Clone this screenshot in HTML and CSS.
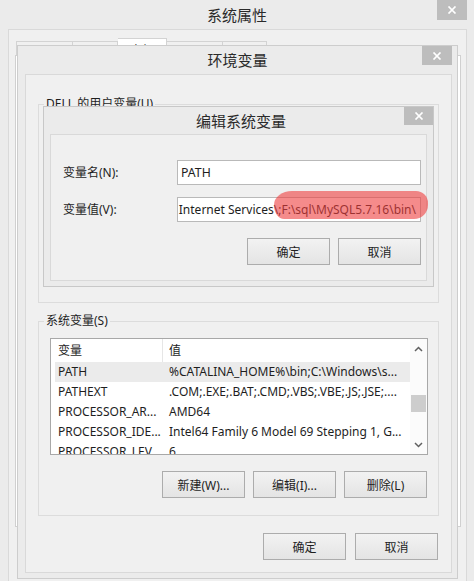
FILE: index.html
```html
<!DOCTYPE html>
<html lang="zh-CN">
<head>
<meta charset="utf-8">
<title>系统属性</title>
<link rel="stylesheet" href="styles.css">
</head>
<body>
<div class="desktop">

  <section class="win win-outer">
    <header class="titlebar tb-outer">
      <h1 class="title">系统属性</h1>
      <button class="close close-outer" aria-label="关闭"><svg width="10" height="8" viewBox="0 0 10 8"><path d="M1.5 0.5 L8.5 7.5 M8.5 0.5 L1.5 7.5" stroke="#fff" stroke-width="1.7" fill="none"/></svg></button>
    </header>
    <div class="client outer-client">
      <div class="tabs">
        <span class="tab tab-a"></span>
        <span class="tab tab-b"></span>
        <span class="tab tab-c selected">高级</span>
        <span class="tab tab-d"></span>
        <span class="tab tab-e"></span>
      </div>
      <div class="tabpanel"></div>
    </div>
  </section>

  <section class="win win-env">
    <header class="titlebar tb-env">
      <h1 class="title">环境变量</h1>
      <button class="close close-env" aria-label="关闭"><svg width="10" height="8" viewBox="0 0 10 8"><path d="M1.5 0.5 L8.5 7.5 M8.5 0.5 L1.5 7.5" stroke="#fff" stroke-width="1.7" fill="none"/></svg></button>
    </header>
    <div class="client env-client">
      <fieldset class="group group-user">
        <legend>DELL 的用户变量(U)</legend>
      </fieldset>
      <fieldset class="group group-sys">
        <legend>系统变量(S)</legend>
        <div class="listbox">
          <div class="list-main">
            <div class="lrow lhead"><span class="cname">变量</span><span class="cval">值</span></div>
            <div class="lrow sel"><span class="cname">PATH</span><span class="cval">%CATALINA_HOME%\bin;C:\Windows\s...</span></div>
            <div class="lrow"><span class="cname">PATHEXT</span><span class="cval">.COM;.EXE;.BAT;.CMD;.VBS;.VBE;.JS;.JSE;....</span></div>
            <div class="lrow"><span class="cname">PROCESSOR_AR...</span><span class="cval">AMD64</span></div>
            <div class="lrow"><span class="cname">PROCESSOR_IDE...</span><span class="cval">Intel64 Family 6 Model 69 Stepping 1, G...</span></div>
            <div class="lrow"><span class="cname">PROCESSOR_LEV...</span><span class="cval">6</span></div>
          </div>
          <div class="vscroll">
            <span class="sb-btn sb-up"><svg width="9" height="6" viewBox="0 0 9 6"><path d="M1 5 L4.5 1.5 L8 5" stroke="#606060" stroke-width="1.5" fill="none"/></svg></span>
            <span class="sb-track"><span class="sb-thumb"></span></span>
            <span class="sb-btn sb-down"><svg width="9" height="6" viewBox="0 0 9 6"><path d="M1 1 L4.5 4.5 L8 1" stroke="#606060" stroke-width="1.5" fill="none"/></svg></span>
          </div>
        </div>
        <div class="btnrow list-btns">
          <button class="btn">新建(W)...</button>
          <button class="btn">编辑(I)...</button>
          <button class="btn">删除(L)</button>
        </div>
      </fieldset>
      <div class="btnrow env-btns">
        <button class="btn">确定</button>
        <button class="btn">取消</button>
      </div>
    </div>
  </section>

  <section class="win win-edit">
    <header class="titlebar tb-edit">
      <h1 class="title">编辑系统变量</h1>
      <button class="close close-edit" aria-label="关闭"><svg width="10" height="8" viewBox="0 0 10 8"><path d="M1.5 0.5 L8.5 7.5 M8.5 0.5 L1.5 7.5" stroke="#fff" stroke-width="1.7" fill="none"/></svg></button>
    </header>
    <div class="client edit-client">
      <div class="form">
        <label class="flabel">变量名(N):</label>
        <div class="field"><span class="ftext">PATH</span></div>
        <label class="flabel">变量值(V):</label>
        <div class="field-wrap">
          <div class="field field-end"><span class="ftext">Internet Services\;F:\sql\MySQL5.7.16\bin\</span></div>
          <span class="mark"></span>
        </div>
      </div>
      <div class="btnrow edit-btns">
        <button class="btn">确定</button>
        <button class="btn">取消</button>
      </div>
    </div>
  </section>

</div>
</body>
</html>
```

FILE: styles.css
```css
* { box-sizing: border-box; margin: 0; padding: 0; }
html, body { width: 474px; height: 581px; overflow: hidden; }
body {
  background: #ebebeb;
  font-family: "Noto Sans", "Noto Sans CJK SC", sans-serif;
  font-size: 12px;
  color: #1e1e1e;
}
.desktop { position: relative; width: 474px; height: 581px; overflow: hidden; }

.win { background: #ebebeb; display: flex; flex-direction: column; }
.titlebar { display: grid; grid-template-columns: 1fr auto 1fr; align-items: start; flex: none; }
.title {
  grid-column: 2;
  font-weight: normal;
  font-size: 15px;
  color: #2a2a2a;
  font-family: "Noto Sans CJK SC", sans-serif;
}
.close {
  grid-column: 3;
  justify-self: end;
  border: 0;
  background: #bdbdbd;
  display: flex;
  align-items: center;
  justify-content: center;
}
.client { background: #f0f0f0; border: 1px solid #d9d9d9; }

/* outer window */
.win-outer { width: 474px; height: 600px; }
.tb-outer { height: 29px; }
.tb-outer .title { line-height: 29px; }
.close-outer { width: 30px; height: 20px; margin-right: 7px; }
.outer-client { flex: 1; margin: 0 7px 0 8px; padding: 8px 0 0 6px; border-bottom: 0; }
.tabs { display: flex; align-items: flex-start; height: 17px; margin-left: 1px; position: relative; z-index: 1; }
.tab {
  height: 14px;
  margin-top: 3px;
  border: 1px solid #d3d3d3;
  border-bottom: 0;
  border-left: 0;
  background: #f0f0f0;
  font-size: 12px;
  line-height: 20px;
  text-align: center;
  overflow: hidden;
  font-family: "Noto Sans CJK SC", sans-serif;
}
.tab-a { width: 57px; border-left: 1px solid #d3d3d3; }
.tab-b { width: 45px; }
.tab-c { width: 49px; }
.tab-d { width: 56px; }
.tab-e { width: 44px; }
.tab.selected { height: 18px; margin-top: 0; background: #fff; line-height: 22px; }
.tabpanel { width: 446px; height: 472px; background: #fff; border: 1px solid #d0d0d0; }

/* environment window */
.win-env {
  position: absolute;
  left: 17px; top: 45px;
  width: 441px; height: 534px;
  border: 1px solid #cdcdcd;
  z-index: 2;
}
.tb-env { height: 28px; }
.tb-env .title { line-height: 28px; }
.close-env { width: 30px; height: 19px; margin-right: 5px; }
.env-client { flex: 1; margin: 0 5px 5px 7px; padding: 21px 12px 0 12px; display: flex; flex-direction: column; }

.group { border: 1px solid #dcdcdc; min-width: 0; padding: 9px 10px 17px 11px; }
.group legend { padding: 0 2px; margin-left: -6px; line-height: 16px; font-size: 12px; color: #1e1e1e; }
.group-user { height: 207px; flex: none; }
.group-sys { margin-top: 10px; flex: none; }

.listbox { height: 117px; border: 1px solid #a8a8a8; background: #fff; display: flex; overflow: hidden; }
.list-main { flex: 1; min-width: 0; overflow: hidden; padding-left: 4px; }
.lrow { display: flex; height: 20px; line-height: 20px; white-space: nowrap; }
.lrow.lhead { height: 23px; line-height: 23px; }
.lrow.sel { background: #ebebeb; }
.cname { width: 108px; flex: none; padding-left: 3px; overflow: hidden; }
.lhead .cname { border-right: 1px solid #e6e6e6; }
.cval { padding-left: 6px; overflow: hidden; flex: 1; min-width: 0; }
.vscroll { width: 17px; flex: none; display: flex; flex-direction: column; background: #fbfbfb; }
.sb-btn { display: flex; align-items: center; justify-content: center; flex: none; }
.sb-up { height: 20px; }
.sb-down { height: 18px; }
.sb-track { flex: 1; display: flex; flex-direction: column; align-items: center; }
.sb-thumb { width: 15px; height: 17px; margin-top: 36px; background: #cdcdcd; }

.btnrow { display: flex; justify-content: flex-end; }
.btn {
  width: 83px;
  height: 27px;
  border: 1px solid #acacac;
  background: linear-gradient(#f2f2f2, #e4e4e4);
  font-family: "Noto Sans", "Noto Sans CJK SC", sans-serif;
  font-size: 12px;
  color: #1e1e1e;
}
.list-btns { margin-top: 16px; gap: 8px; margin-right: 1px; }
.env-btns { margin-top: 17px; gap: 9px; margin-right: 1px; }

/* edit dialog */
.win-edit {
  position: absolute;
  left: 43px; top: 106px;
  width: 391px; height: 181px;
  border: 1px solid #c8c8c8;
  z-index: 3;
}
.tb-edit { height: 27px; }
.tb-edit .title { line-height: 27px; padding-left: 5px; }
.close-edit { width: 29px; height: 18px; margin-right: 0; }
.edit-client { flex: 1; margin: 0 6px 5px 6px; padding: 25px 5px 0 12px; }
.form { display: grid; grid-template-columns: 114px 244px; row-gap: 12px; align-items: center; }
.flabel { font-size: 12px; line-height: 16px; }
.field {
  height: 25px;
  border: 1px solid #b9b9b9;
  background: #fff;
  padding: 0 4px 0 3px;
  line-height: 23px;
  white-space: nowrap;
  overflow: hidden;
  display: flex;
}
.field-end { justify-content: flex-end; }
.ftext { flex: none; font-size: 12.3px; }
.field-end .ftext { font-size: 12px; }
.field-wrap { position: relative; }
.mark {
  position: absolute;
  left: 97px; top: -6px;
  width: 154px; height: 28px;
  background: rgba(238, 62, 62, 0.6);
  border-radius: 18px 12px 14px 10px / 14px 12px 14px 14px;
  filter: blur(0.6px);
}
.edit-btns { margin-top: 16px; gap: 8px; margin-right: 0; }
```
